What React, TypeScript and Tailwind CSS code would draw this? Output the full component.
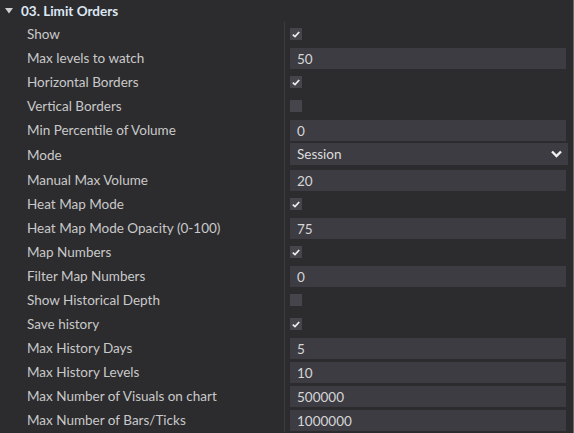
import React from 'react'

type Row =
  | { label: string; kind: 'check'; value: boolean }
  | { label: string; kind: 'text'; value: string }
  | { label: string; kind: 'select'; value: string }

const rows: Row[] = [
  { label: 'Show', kind: 'check', value: true },
  { label: 'Max levels to watch', kind: 'text', value: '50' },
  { label: 'Horizontal Borders', kind: 'check', value: true },
  { label: 'Vertical Borders', kind: 'check', value: false },
  { label: 'Min Percentile of Volume', kind: 'text', value: '0' },
  { label: 'Mode', kind: 'select', value: 'Session' },
  { label: 'Manual Max Volume', kind: 'text', value: '20' },
  { label: 'Heat Map Mode', kind: 'check', value: true },
  { label: 'Heat Map Mode Opacity (0-100)', kind: 'text', value: '75' },
  { label: 'Map Numbers', kind: 'check', value: true },
  { label: 'Filter Map Numbers', kind: 'text', value: '0' },
  { label: 'Show Historical Depth', kind: 'check', value: false },
  { label: 'Save history', kind: 'check', value: true },
  { label: 'Max History Days', kind: 'text', value: '5' },
  { label: 'Max History Levels', kind: 'text', value: '10' },
  { label: 'Max Number of Visuals on chart', kind: 'text', value: '500000' },
  { label: 'Max Number of Bars/Ticks', kind: 'text', value: '1000000' },
]

function Check({ on }: { on: boolean }) {
  return (
    <div className="w-[12px] h-[12px] bg-[#45454b] flex items-center justify-center">
      {on && (
        <svg width="8" height="7" viewBox="0 0 8 7">
          <path d="M0.8 3.6 L3 5.6 L7.2 1" stroke="#ececec" strokeWidth="1.8" fill="none" />
        </svg>
      )}
    </div>
  )
}

function Field({ row }: { row: Row }) {
  if (row.kind === 'check') {
    return (
      <div className="h-[24px] flex items-center">
        <Check on={row.value} />
      </div>
    )
  }
  if (row.kind === 'select') {
    return (
      <div className="h-[26px] pt-px">
        <div className="h-[22px] w-[278px] bg-[#3d3c43] flex items-center justify-between pl-[7px] pr-[6px]">
          <span className="text-[13.5px] text-[#dcdcdc] pt-px">{row.value}</span>
          <svg width="11" height="8" viewBox="0 0 11 8">
            <path d="M1 1.5 L5.5 6 L10 1.5" stroke="#f0f0f0" strokeWidth="2.4" fill="none" />
          </svg>
        </div>
      </div>
    )
  }
  return (
    <div className="h-[24px] pt-[2px]">
      <div className="h-[21px] w-[276px] bg-[#3d3c43] flex items-center pl-[7px]">
        <span className="text-[13.5px] text-[#d6d6d6] pt-px">{row.value}</span>
      </div>
    </div>
  )
}

export default function App() {
  return (
    <div
      className="w-[574px] h-[433px] bg-[#2c2c2f] overflow-hidden relative"
      style={{ fontFamily: 'Lato, "Noto Sans", sans-serif' }}
    >
      {/* Section header */}
      <div className="h-[22px] flex items-center">
        <svg className="ml-[5px] mr-[8px]" width="8" height="6" viewBox="0 0 8 6">
          <path d="M0 0 L8 0 L4 5.5 Z" fill="#cfcfcf" />
        </svg>
        <span className="text-[13.5px] font-bold text-[#dde7f3]">03. Limit Orders</span>
      </div>

      {/* Property grid */}
      <div className="flex">
        <div className="w-[284px] pl-[27px]">
          {rows.map((row) => (
            <div
              key={row.label}
              className={`${row.kind === 'select' ? 'h-[26px]' : 'h-[24px]'} flex items-center pt-px text-[13.5px] text-[#c9c9c9]`}
            >
              {row.label}
            </div>
          ))}
        </div>
        <div className="w-px bg-[#3c3c40]" />
        <div className="pl-[5px]">
          {rows.map((row) => (
            <Field key={row.label} row={row} />
          ))}
        </div>
      </div>

      {/* scrollbar edge */}
      <div className="absolute top-0 right-0 w-px h-full bg-[#6a6a6e]" />
    </div>
  )
}
